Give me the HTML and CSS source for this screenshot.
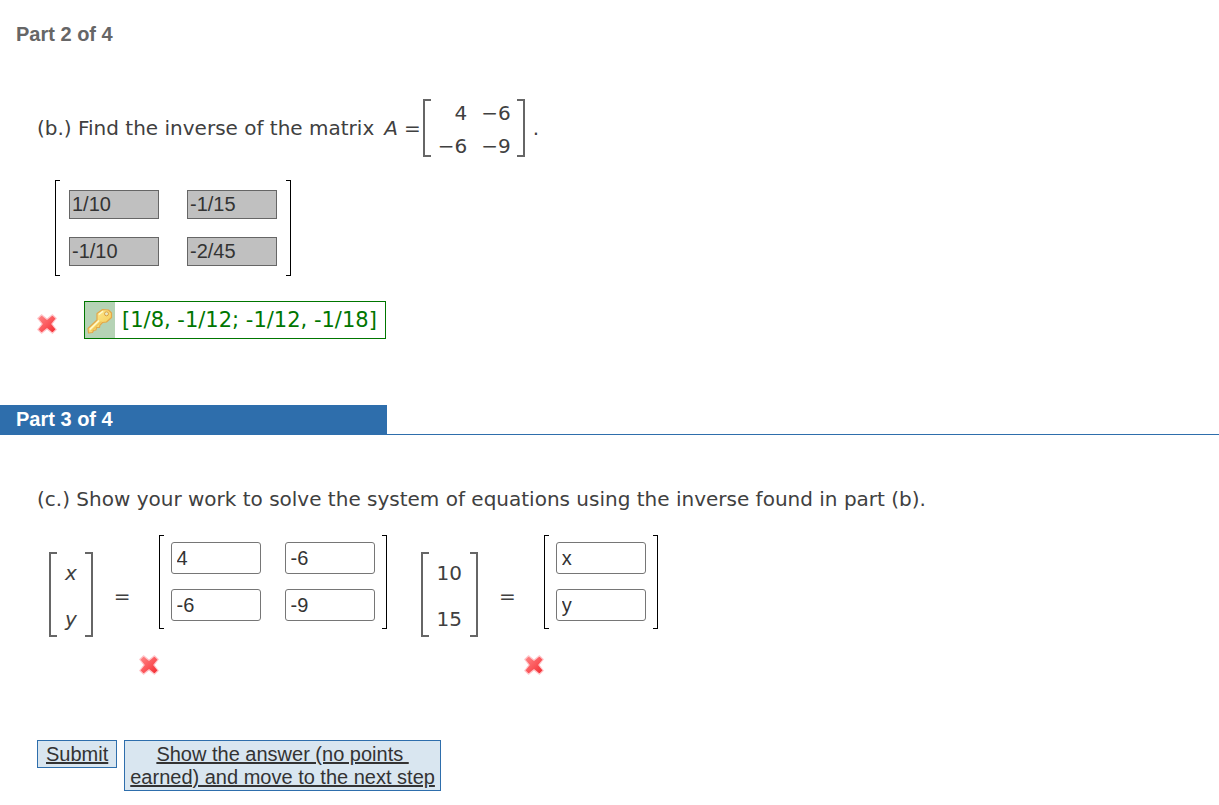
FILE: index.html
```html
<!DOCTYPE html>
<html lang="en">
<head>
<meta charset="utf-8">
<title>Matrix inverse tutorial</title>
<link rel="stylesheet" href="styles.css">
</head>
<body>
<svg class="defs" aria-hidden="true">
  <defs>
    <linearGradient id="red" x1="0" y1="0" x2="1" y2="1">
      <stop offset="0" stop-color="#ff8a8a"/>
      <stop offset="0.55" stop-color="#fb5559"/>
      <stop offset="1" stop-color="#f0262c"/>
    </linearGradient>
    <linearGradient id="gold" x1="0" y1="0" x2="1" y2="1">
      <stop offset="0" stop-color="#fff0a0"/>
      <stop offset="1" stop-color="#f3c548"/>
    </linearGradient>
    <symbol id="cross" viewBox="0 0 20 20">
      <path d="M4.500 0.800 L10 5.200 L15.500 0.800 L19.200 4.500 L14.800 10 L19.200 15.500 L15.500 19.200 L10 14.800 L4.500 19.200 L0.800 15.500 L5.200 10 L0.800 4.500Z" fill="url(#red)" stroke="#ffc4c8" stroke-width="1.200" stroke-linejoin="round"/>
    </symbol>
  </defs>
</svg>
<main>
  <section>
    <h2 class="part">Part 2 of 4</h2>
    <div class="work">
      <p class="question">
        <span>(b.) Find the inverse of the matrix</span>
        <i class="name">A</i>
        <span class="equals">=</span>
        <span class="matrix given"><span>4</span><span>−6</span><span>−6</span><span>−9</span></span>
        <span class="stop">.</span>
      </p>
      <div class="matrix thin graded">
        <input type="text" aria-label="Row 1, column 1" value="1/10" disabled>
        <input type="text" aria-label="Row 1, column 2" value="-1/15" disabled>
        <input type="text" aria-label="Row 2, column 1" value="-1/10" disabled>
        <input type="text" aria-label="Row 2, column 2" value="-2/45" disabled>
      </div>
      <div class="result">
        <svg class="mark" role="img" aria-label="Incorrect"><use href="#cross"/></svg>
        <div class="answer">
          <span class="key">
            <svg viewBox="0 0 26 26" width="26" height="26" aria-hidden="true">
              <path d="M10 5.500 L15.500 1.500 L21.500 2 L24.500 5 L24.500 9.500 L19.500 14 L15.500 14.500 L13 17 L12.500 19.500 L9.500 19.500 L9 22 L6.500 22.500 L5.500 24.500 L1.500 25 L1 20.500 L10 12Z" fill="url(#gold)" stroke="#e3a84a" stroke-width="1.200" stroke-linejoin="round"/>
              <path d="M2.800 21.500 L12 12.500 M11.800 6.500 L16 3.200" fill="none" stroke="#fffbd0" stroke-width="1.400"/>
              <path d="M4.500 23 L14 13.500" fill="none" stroke="#eab845" stroke-width="1"/>
              <circle cx="19.500" cy="5.800" r="2" fill="#e6e9c8" stroke="#dda040"/>
            </svg>
          </span>
          <span class="text">[1/8, -1/12; -1/12, -1/18]</span>
        </div>
      </div>
    </div>
  </section>
  <section>
    <div class="rule"><h2 class="part current">Part 3 of 4</h2></div>
    <div class="work">
      <p class="prompt">(c.) Show your work to solve the system of equations using the inverse found in part (b).</p>
      <div class="equation">
        <div class="matrix column unknowns"><i>x</i><i>y</i></div>
        <span class="sign">=</span>
        <div class="group">
          <div class="matrix thin entry">
            <input type="text" aria-label="Row 1, column 1" value="4">
            <input type="text" aria-label="Row 1, column 2" value="-6">
            <input type="text" aria-label="Row 2, column 1" value="-6">
            <input type="text" aria-label="Row 2, column 2" value="-9">
          </div>
          <svg class="mark" role="img" aria-label="Incorrect"><use href="#cross"/></svg>
        </div>
        <div class="matrix column constants"><span>10</span><span>15</span></div>
        <span class="sign">=</span>
        <div class="group">
          <div class="matrix thin entry single">
            <input type="text" aria-label="Solution, row 1" value="x">
            <input type="text" aria-label="Solution, row 2" value="y">
          </div>
          <svg class="mark" role="img" aria-label="Incorrect"><use href="#cross"/></svg>
        </div>
      </div>
      <div class="actions">
        <button type="button">Submit</button>
        <button type="button" class="wide">Show the answer (no points&nbsp;<br>earned) and move to the next step</button>
      </div>
    </div>
  </section>
</main>
</body>
</html>
```

FILE: styles.css
```css
*, *::before, *::after { box-sizing: border-box; }

body {
  margin: 0;
  background: #fff;
  color: #404040;
  font: 20px/24px "DejaVu Sans", Verdana, sans-serif;
}

.defs { position: absolute; width: 0; height: 0; }

.part {
  margin: 0;
  padding: 20px 16px 0;
  color: #666;
  font: bold 20px/28px "Liberation Sans", Arial, sans-serif;
}

.rule {
  margin-top: 66px;
  border-bottom: 1px solid #2e6eac;
}

.part.current {
  width: 387px;
  max-width: 100%;
  padding-top: 0;
  padding-bottom: 1px;
  background: #2e6eac;
  color: #fff;
}

.work { padding-left: 37px; }

.question {
  display: flex;
  align-items: center;
  margin: 51px 0 0;
}

.name { margin-left: 10px; }
.equals { margin: 0 2px 0 6px; }
.stop { margin-left: 8px; }

/* Square brackets are drawn by the two pseudo-elements. */
.matrix {
  position: relative;
  display: grid;
  align-content: start;
  width: max-content;
}

.matrix::before,
.matrix::after {
  content: "";
  position: absolute;
  top: 0;
  bottom: 0;
  width: 8px;
  border: 2px solid #666;
}

.matrix::before { left: 0; border-right: 0; }
.matrix::after { right: 0; border-left: 0; }

.matrix.thin::before,
.matrix.thin::after {
  width: 5px;
  border-width: 1px;
  border-color: #000;
}

.given {
  grid-template-columns: auto auto;
  gap: 9px 14px;
  padding: 2px 14px 0 15px;
  height: 58px;
  text-align: right;
}

.matrix input {
  width: 90px;
  margin: 0;
  border: 1px solid #767676;
  color: #333;
  font: 20px "Liberation Sans", Arial, sans-serif;
}

.graded {
  grid-template-columns: auto auto;
  gap: 18px 28px;
  margin: 23px 0 0 18px;
  padding: 10px 14px;
}

.graded input {
  height: 29px;
  padding: 0 2px;
  border-color: #666;
  background: #c0c0c0;
}

.result {
  display: flex;
  align-items: flex-start;
  gap: 27px;
  margin-top: 25px;
}

.mark { display: block; width: 20px; height: 20px; }
.result .mark { margin-top: 13px; }

.answer {
  display: flex;
  min-width: 302px;
  height: 38px;
  border: 1px solid #007600;
  color: #007600;
  font-size: 21px;
}

.key {
  display: flex;
  align-items: flex-end;
  justify-content: center;
  width: 30px;
  padding-bottom: 4px;
  background: #b5d3b5;
}

.text { padding: 6px 3px 0 7px; }

.prompt { margin: 52px 0 0; }

.equation {
  display: flex;
  align-items: flex-start;
  margin-top: 24px;
}

.column {
  gap: 22px;
  height: 85px;
  margin-top: 17px;
  padding: 9px 16px 0;
  text-align: center;
}

.unknowns { margin-left: 12px; }
.constants { margin-left: 34px; }
.sign { margin: 49px 8px 0 21px; }

.group { display: grid; gap: 26px; }
.group .matrix { margin-left: 20px; }

.entry {
  grid-template-columns: auto auto;
  gap: 15px 24px;
  padding: 7px 12px 8px;
}

.entry.single { grid-template-columns: auto; }

.entry input {
  height: 32px;
  padding: 0 5px;
  border-radius: 3px;
  background: #fff;
}

.actions {
  display: flex;
  align-items: flex-start;
  gap: 7px;
  margin-top: 65px;
}

.actions button {
  padding: 2px 8px 1px;
  border: 1px solid #2e6eac;
  background: #d9e6f0;
  color: #333;
  font: 20px/23px "Liberation Sans", Arial, sans-serif;
  text-decoration: underline;
}

.actions .wide { padding: 2px 5px 1px; }
```
